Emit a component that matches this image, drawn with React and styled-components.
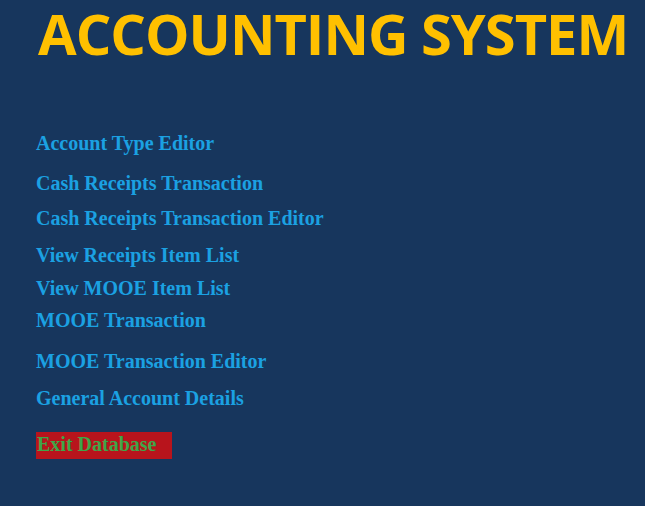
import React from "react";
import styled, { createGlobalStyle } from "styled-components";

const Global = createGlobalStyle`
  html, body { margin: 0; padding: 0; background: #17365d; }
  body { width: 645px; height: 506px; overflow: hidden; }
`;

const Page = styled.div`
  width: 645px;
  height: 506px;
  background: #17365d;
  padding: 0 0 0 36px;
  box-sizing: border-box;
  display: flex;
  flex-direction: column;
`;

const Title = styled.h1`
  margin: 1px 0 0 2px;
  font-family: "Open Sans", sans-serif;
  font-weight: 700;
  font-size: 56px;
  line-height: 64px;
  color: #ffc000;
  letter-spacing: -1px;
  white-space: nowrap;
`;

const Menu = styled.nav`
  display: flex;
  flex-direction: column;
  align-items: flex-start;
  margin-top: 68px;
`;

const Item = styled.a`
  display: block;
  margin-top: ${(p) => p.$gap}px;
  font-family: "Liberation Serif", "DejaVu Serif", serif;
  font-weight: 700;
  font-size: 20px;
  line-height: 20px;
  color: #1ba1e2;
  text-decoration: none;
  white-space: nowrap;
`;

const ExitButton = styled.button`
  margin-top: 24px;
  width: 136px;
  height: 27px;
  padding: 0 0 2px 1px;
  border: none;
  background: #b8141c;
  text-align: left;
  font-family: "Liberation Serif", "DejaVu Serif", serif;
  font-weight: 700;
  font-size: 20px;
  line-height: 25px;
  color: #3fa648;
  cursor: pointer;
`;

const items = [
  ["Account Type Editor", 0],
  ["Cash Receipts Transaction", 20],
  ["Cash Receipts Transaction Editor", 15],
  ["View Receipts Item List", 17],
  ["View MOOE Item List", 13],
  ["MOOE Transaction", 12],
  ["MOOE Transaction Editor", 21],
  ["General Account Details", 17],
];

export default function App() {
  return (
    <>
      <Global />
      <Page>
        <Title>ACCOUNTING SYSTEM</Title>
        <Menu>
          {items.map(([label, gap]) => (
            <Item key={label} href="#" $gap={gap}>
              {label}
            </Item>
          ))}
          <ExitButton>Exit Database</ExitButton>
        </Menu>
      </Page>
    </>
  );
}
